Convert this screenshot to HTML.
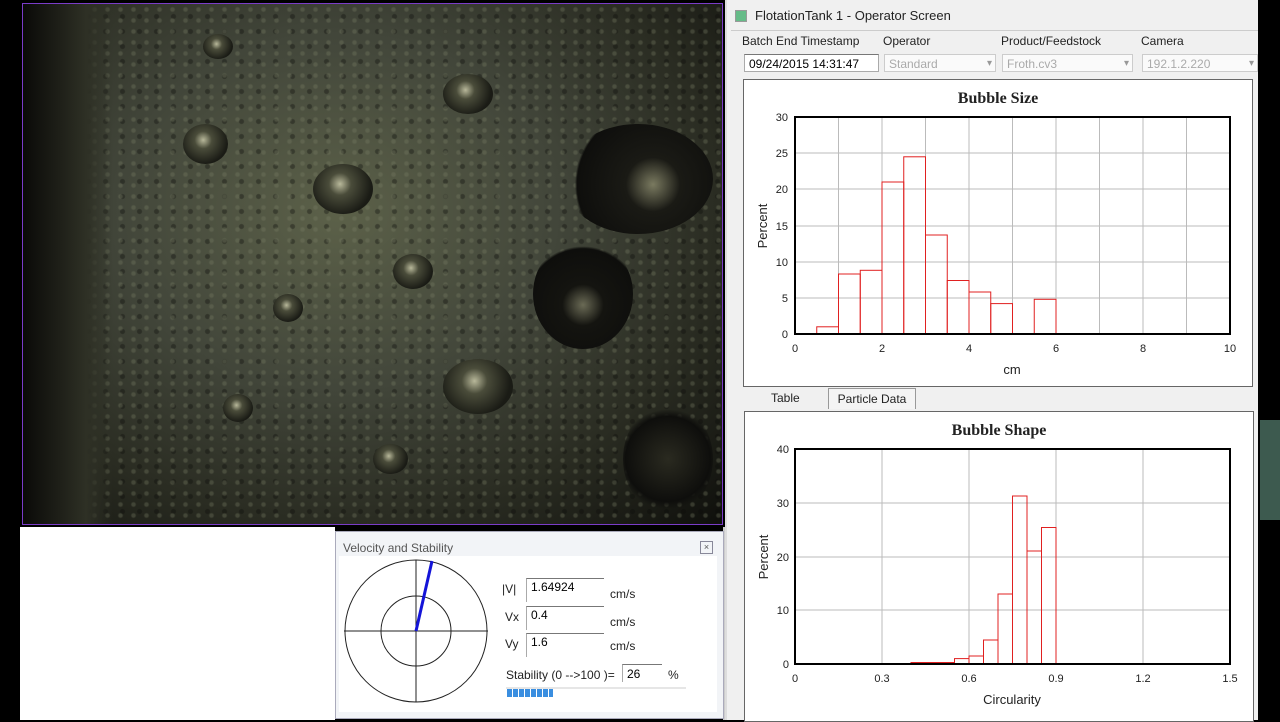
<!DOCTYPE html>
<html><head><meta charset="utf-8"><style>
body{margin:0;width:1280px;height:720px;background:#000;position:relative;overflow:hidden;font-family:"Liberation Sans",sans-serif;}
.a{position:absolute}
.lbl{font-size:12px;color:#222;position:absolute}
.inp{position:absolute;background:#fff;border:1px solid #aaa;border-top-color:#777;font-size:12px;height:18px;line-height:18px;padding-left:4px;box-sizing:border-box}
.dd{color:#aaa;border-color:#ccc;background:#fafafa}
.dd:after{content:"▾";position:absolute;right:3px;color:#999;font-size:10px}
.b{position:absolute;border-radius:50%;background:radial-gradient(circle at 45% 40%,#b8b89a 0%,#4a4c3a 25%,#1a1b15 70%)}
</style></head><body>
<!-- camera -->
<div class="a" style="left:22px;top:3px;width:699px;height:520px;border:1px solid #7a3cc8;background:radial-gradient(circle,rgba(120,125,100,.35) 1.5px,transparent 3px) 0 0/13px 11px,radial-gradient(circle,rgba(10,10,8,.35) 2px,transparent 3px) 6px 5px/17px 15px,radial-gradient(ellipse at 45% 40%,#5c6149 0%,#42463a 40%,#2a2c22 70%,#18191399 100%);overflow:hidden">
<div class="a" style="left:0;top:0;width:90px;height:520px;background:linear-gradient(90deg,#0a0a08 0%,#1e1f18 40%,#2e3025 70%,transparent)"></div>
<div class="a" style="left:540px;top:120px;width:150px;height:110px;border-radius:50%;background:radial-gradient(circle at 60% 55%,#7a7a60 0%,#1a1a15 25%,#0e0e0c 70%,transparent 72%)"></div>
<div class="a" style="left:510px;top:235px;width:100px;height:110px;border-radius:50%;background:radial-gradient(circle at 50% 60%,#6a6a55 0%,#141410 25%,#0e0e0c 68%,transparent 71%)"></div>
<div class="b" style="left:420px;top:355px;width:70px;height:55px"></div>
<div class="b" style="left:290px;top:160px;width:60px;height:50px"></div>
<div class="b" style="left:420px;top:70px;width:50px;height:40px"></div>
<div class="b" style="left:160px;top:120px;width:45px;height:40px"></div>
<div class="b" style="left:370px;top:250px;width:40px;height:35px"></div>
<div class="b" style="left:200px;top:390px;width:30px;height:28px"></div>
<div class="b" style="left:250px;top:290px;width:30px;height:28px"></div>
<div class="b" style="left:350px;top:440px;width:35px;height:30px"></div>
<div class="b" style="left:180px;top:30px;width:30px;height:25px"></div>
<div class="a" style="left:600px;top:400px;width:90px;height:110px;border-radius:50%;background:radial-gradient(circle,#2a2a20,#0e0e0c 60%,transparent 70%)"></div>
</div>
<div class="a" style="left:20px;top:527px;width:315px;height:193px;background:#fff"></div>
<div class="a" style="left:723px;top:527px;width:2px;height:193px;background:#ccc"></div>
<!-- velocity panel -->
<div class="a" style="left:335px;top:531px;width:387px;height:186px;background:#f2f4f7;border:1px solid #aab">
<div class="a" style="left:7px;top:9px;font-size:12px;color:#555">Velocity and Stability</div>
<div class="a" style="left:364px;top:9px;width:11px;height:11px;border:1px solid #889;font-size:9px;line-height:11px;text-align:center;color:#555">×</div>
<div class="a" style="left:3px;top:24px;width:378px;height:156px;background:#fff"></div>
<svg class="a" style="left:0;top:0" width="387" height="186">
<circle cx="80" cy="99" r="71" fill="none" stroke="#222"/><circle cx="80" cy="99" r="35" fill="none" stroke="#222"/>
<line x1="8" y1="99" x2="152" y2="99" stroke="#222"/><line x1="80" y1="28" x2="80" y2="170" stroke="#222"/>
<line x1="80" y1="99" x2="96" y2="29" stroke="#1414d8" stroke-width="3"/>
<text x="166" y="61" font-size="12" fill="#222">|V|</text><text x="169" y="89" font-size="12" fill="#222">Vx</text><text x="169" y="116" font-size="12" fill="#222">Vy</text>
<text x="274" y="66" font-size="12" fill="#222">cm/s</text><text x="274" y="94" font-size="12" fill="#222">cm/s</text><text x="274" y="118" font-size="12" fill="#222">cm/s</text>
<text x="170" y="147" font-size="12" fill="#222">Stability (0 --&gt;100 )=</text><text x="332" y="147" font-size="12" fill="#222">%</text>
<line x1="170" y1="156" x2="350" y2="156" stroke="#ccc"/>
<g fill="#3a8ee0"><rect x="171" y="157" width="5" height="8"/><rect x="177" y="157" width="5" height="8"/><rect x="183" y="157" width="5" height="8"/><rect x="189" y="157" width="5" height="8"/><rect x="195" y="157" width="5" height="8"/><rect x="201" y="157" width="5" height="8"/><rect x="207" y="157" width="5" height="8"/><rect x="213" y="157" width="4" height="8"/></g>
</svg>
<div class="inp" style="left:190px;top:46px;width:78px;height:24px;line-height:16px;border-right:none;border-bottom:none">1.64924</div>
<div class="inp" style="left:190px;top:74px;width:78px;height:24px;line-height:16px;border-right:none;border-bottom:none">0.4</div>
<div class="inp" style="left:190px;top:101px;width:78px;height:24px;line-height:16px;border-right:none;border-bottom:none">1.6</div>
<div class="inp" style="left:286px;top:132px;width:40px;border-right:none;border-bottom:none">26</div>
</div>
<!-- right window -->
<div class="a" style="left:725px;top:0;width:533px;height:720px;background:#f0f0f0;border-left:2px solid #ddd">
<div class="a" style="left:8px;top:10px;width:10px;height:10px;background:#6b8;border:1px solid #999"></div>
<div class="a" style="left:28px;top:8px;font-size:13px;color:#222">FlotationTank 1 - Operator Screen</div>
<div class="a" style="left:4px;top:30px;width:529px;height:1px;background:#ccc"></div>
</div>
<div class="lbl" style="left:742px;top:34px">Batch End Timestamp</div>
<div class="lbl" style="left:883px;top:34px">Operator</div>
<div class="lbl" style="left:1001px;top:34px">Product/Feedstock</div>
<div class="lbl" style="left:1141px;top:34px">Camera</div>
<div class="inp" style="left:744px;top:54px;width:135px">09/24/2015 14:31:47</div>
<div class="inp dd" style="left:884px;top:54px;width:112px">Standard</div>
<div class="inp dd" style="left:1002px;top:54px;width:131px">Froth.cv3</div>
<div class="inp dd" style="left:1142px;top:54px;width:116px">192.1.2.220</div>
<div class="a" style="left:743px;top:79px;width:508px;height:306px;background:#fff;border:1px solid #666"></div>
<div class="a" style="left:744px;top:411px;width:508px;height:309px;background:#fff;border:1px solid #666"></div>
<div class="lbl" style="left:771px;top:391px">Table</div>
<div class="a" style="left:828px;top:388px;width:86px;height:20px;border:1px solid #999;border-bottom:none;font-size:12px;line-height:20px;text-align:center;color:#222;background:#f4f4f4">Particle Data</div>
<div class="a" style="left:1258px;top:0;width:22px;height:720px;background:#000"></div>
<div class="a" style="left:1260px;top:420px;width:20px;height:100px;background:#3d5a4f"></div>
<svg class="a" style="left:0;top:0" width="1280" height="720" font-family="Liberation Sans" font-size="11" fill="#222">
<text x="998" y="103" font-family="Liberation Serif" font-weight="bold" font-size="16" text-anchor="middle">Bubble Size</text>
<g stroke="#bbb"><line x1="838.5" y1="117" x2="838.5" y2="334"/><line x1="882" y1="117" x2="882" y2="334"/><line x1="925.5" y1="117" x2="925.5" y2="334"/><line x1="969" y1="117" x2="969" y2="334"/><line x1="1012.5" y1="117" x2="1012.5" y2="334"/><line x1="1056" y1="117" x2="1056" y2="334"/><line x1="1099.5" y1="117" x2="1099.5" y2="334"/><line x1="1143" y1="117" x2="1143" y2="334"/><line x1="1186.5" y1="117" x2="1186.5" y2="334"/>
<line x1="795" y1="153" x2="1230" y2="153"/><line x1="795" y1="189" x2="1230" y2="189"/><line x1="795" y1="226" x2="1230" y2="226"/><line x1="795" y1="262" x2="1230" y2="262"/><line x1="795" y1="298" x2="1230" y2="298"/></g>
<g fill="none" stroke="#e02020"><rect x="816.75" y="326.8" width="21.75" height="7.2"/><rect x="838.5" y="274" width="21.75" height="60"/><rect x="860.25" y="270.3" width="21.75" height="63.7"/><rect x="882" y="182" width="21.75" height="152"/><rect x="903.75" y="156.8" width="21.75" height="177.2"/><rect x="925.5" y="235" width="21.75" height="99"/><rect x="947.25" y="280.5" width="21.75" height="53.5"/><rect x="969" y="292" width="21.75" height="42"/><rect x="990.75" y="303.6" width="21.75" height="30.4"/><rect x="1034.25" y="299.3" width="21.75" height="34.7"/></g>
<rect x="795" y="117" width="435" height="217" fill="none" stroke="#000" stroke-width="2"/>
<g text-anchor="end"><text x="788" y="121">30</text><text x="788" y="193">20</text><text x="788" y="230">15</text><text x="788" y="266">10</text><text x="788" y="302">5</text><text x="788" y="338">0</text><text x="788" y="157">25</text></g>
<g text-anchor="middle"><text x="795" y="352">0</text><text x="882" y="352">2</text><text x="969" y="352">4</text><text x="1056" y="352">6</text><text x="1143" y="352">8</text><text x="1230" y="352">10</text><text x="1012" y="374" font-size="13">cm</text></g>
<text transform="translate(767,226) rotate(-90)" text-anchor="middle" font-size="13">Percent</text>

<text x="999" y="435" font-family="Liberation Serif" font-weight="bold" font-size="16" text-anchor="middle">Bubble Shape</text>
<g stroke="#bbb"><line x1="882" y1="449" x2="882" y2="664"/><line x1="969" y1="449" x2="969" y2="664"/><line x1="1056" y1="449" x2="1056" y2="664"/><line x1="1143" y1="449" x2="1143" y2="664"/>
<line x1="795" y1="503" x2="1230" y2="503"/><line x1="795" y1="557" x2="1230" y2="557"/><line x1="795" y1="610" x2="1230" y2="610"/></g>
<g fill="none" stroke="#e02020"><rect x="911" y="662.5" width="14.5" height="1.5"/><rect x="925.5" y="662.5" width="14.5" height="1.5"/><rect x="940" y="662.5" width="14.5" height="1.5"/><rect x="954.5" y="658.6" width="14.5" height="5.4"/><rect x="969" y="656" width="14.5" height="8"/><rect x="983.5" y="640" width="14.5" height="24"/><rect x="998" y="594" width="14.5" height="70"/><rect x="1012.5" y="496" width="14.5" height="168"/><rect x="1027" y="551" width="14.5" height="113"/><rect x="1041.5" y="527.5" width="14.5" height="136.5"/></g>
<rect x="795" y="449" width="435" height="215" fill="none" stroke="#000" stroke-width="2"/>
<g text-anchor="end"><text x="789" y="453">40</text><text x="789" y="507">30</text><text x="789" y="561">20</text><text x="789" y="614">10</text><text x="789" y="668">0</text></g>
<g text-anchor="middle"><text x="795" y="682">0</text><text x="882" y="682">0.3</text><text x="969" y="682">0.6</text><text x="1056" y="682">0.9</text><text x="1143" y="682">1.2</text><text x="1230" y="682">1.5</text><text x="1012" y="704" font-size="13">Circularity</text></g>
<text transform="translate(768,557) rotate(-90)" text-anchor="middle" font-size="13">Percent</text>
</svg>
</body></html>
